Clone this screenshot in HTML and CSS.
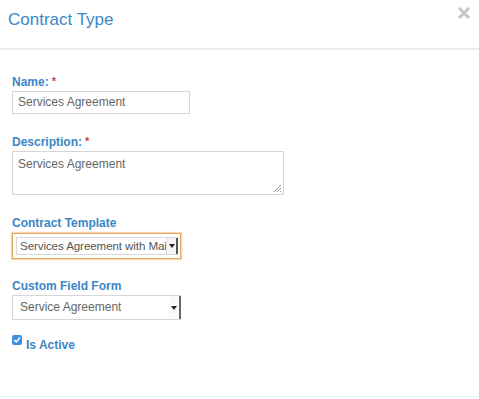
FILE: index.html
```html
<!DOCTYPE html>
<html>
<head>
<meta charset="utf-8">
<link rel="stylesheet" href="styles.css">
</head>
<body>
<div class="modal">
  <div class="modal-header">
    <h1 class="title">Contract Type</h1>
    <svg class="close" width="12" height="12" viewBox="0 0 12 12"><path d="M2 2L10 10M10 2L2 10" stroke="#c6c6c6" stroke-width="3" stroke-linecap="square"/></svg>
  </div>
  <div class="modal-body">
    <div class="field f-name">
      <div class="label">Name:<span class="req">*</span></div>
      <div class="input input-name">Services Agreement</div>
    </div>
    <div class="field f-desc">
      <div class="label">Description:<span class="req">*</span></div>
      <div class="textarea">Services Agreement
        <svg class="grip" width="9" height="9" viewBox="0 0 9 9"><path d="M8 1L1 8M8 4L4 8M8 7L7 8" stroke="#999" stroke-width="1"/></svg>
      </div>
    </div>
    <div class="field f-tpl">
      <div class="label">Contract Template</div>
      <div class="focus-ring">
        <div class="select select-inner">
          <span class="sel-text">Services Agreement with Mai</span>
          <span class="arrow"><svg width="6" height="4" viewBox="0 0 6 4"><path d="M0 0H6L3 4Z" fill="#222"/></svg></span>
        </div>
      </div>
    </div>
    <div class="field f-form">
      <div class="label">Custom Field Form</div>
      <div class="select select-form">
        <span class="sel-text">Service Agreement</span>
        <span class="arrow"><svg width="6" height="4" viewBox="0 0 6 4"><path d="M0 0H6L3 4Z" fill="#222"/></svg></span>
      </div>
    </div>
    <div class="check-row">
      <span class="checkbox"><svg width="10" height="10" viewBox="0 0 10 10"><path d="M2.5 5.2L4.3 7L7.6 2.8" stroke="#fff" stroke-width="1.4" fill="none" stroke-linecap="round" stroke-linejoin="round"/></svg></span>
      <span class="check-label">Is Active</span>
    </div>
  </div>
  <div class="modal-footer"></div>
</div>
</body>
</html>
```
FILE: styles.css
```css
html, body {
  margin: 0;
  padding: 0;
  background: #fff;
}
body {
  font-family: "Liberation Sans", Arial, Helvetica, sans-serif;
  width: 479px;
  height: 399px;
  overflow: hidden;
}
.modal {
  display: flex;
  flex-direction: column;
  height: 399px;
}
.modal-header {
  position: relative;
  height: 48px;
  border-bottom: 2px solid #ececec;
  box-sizing: content-box;
}
.title {
  margin: 0;
  padding: 10px 0 0 8px;
  font-size: 17px;
  line-height: 20px;
  font-weight: normal;
  color: #3d87c6;
}
.close {
  position: absolute;
  right: 9px;
  top: 7px;
}
.modal-body {
  padding: 25px 12px 0 12px;
  flex: 1;
}
.field {
  display: flex;
  flex-direction: column;
  align-items: flex-start;
}
.label {
  font-size: 12px;
  line-height: 14px;
  font-weight: bold;
  color: #3b86c6;
  margin-bottom: 2px;
}
.req {
  color: #c6463f;
  margin-left: 3px;
  font-size: 11px;
  vertical-align: top;
  position: relative;
  top: -1px;
}
.input {
  box-sizing: border-box;
  width: 178px;
  height: 23px;
  border: 1px solid #d6d6d6;
  padding: 0 5px;
  font-size: 12px;
  line-height: 21px;
  color: #666;
}
.f-name { margin-bottom: 21px; }
.f-desc { margin-bottom: 21px; }
.f-tpl { margin-bottom: 20px; }
.f-form { margin-bottom: 15px; }
.textarea {
  position: relative;
  box-sizing: border-box;
  width: 272px;
  height: 44px;
  border: 1px solid #d6d6d6;
  padding: 4px 5px;
  font-size: 12px;
  line-height: 16px;
  color: #666;
}
.grip {
  position: absolute;
  right: 1px;
  bottom: 1px;
}
.focus-ring {
  box-sizing: border-box;
  width: 169px;
  height: 26px;
  border: 1px solid #e6a85f;
  box-shadow: 0 0 1px 1px #f6d6ae;
  padding: 3px 2px 3px 3px;
  margin-top: 1px;
}
.select {
  box-sizing: border-box;
  display: flex;
  align-items: stretch;
  background: #fff;
}
.select-inner {
  height: 18px;
  border: 1px solid #d8d8d8;
  border-right: none;
}
.select-form {
  width: 169px;
  height: 25px;
  border: 1px solid #d6d6d6;
  border-right: none;
}
.sel-text {
  flex: 1;
  overflow: hidden;
  white-space: nowrap;
  font-size: 12px;
  color: #555;
  padding-left: 3px;
  line-height: 16px;
}
.select-inner .sel-text {
  font-size: 11.6px;
  letter-spacing: -0.1px;
}
.select-form .sel-text {
  padding-left: 7px;
  line-height: 23px;
  color: #666;
}
.arrow {
  width: 12px;
  display: flex;
  align-items: center;
  justify-content: center;
  background: #f4f4f4;
  border-left: 1px solid #e2e2e2;
  border-right: 2px solid #555;
  box-sizing: border-box;
}
.select-form .arrow {
  width: 12px;
  background: #fafafa;
  border-left: none;
  border-right: 2px solid #666;
}
.check-row {
  display: flex;
  align-items: flex-start;
}
.checkbox {
  width: 10px;
  height: 10px;
  border-radius: 2px;
  background: #3f8fe0;
  display: flex;
  align-items: center;
  justify-content: center;
  margin-right: 4px;
}
.check-label {
  font-size: 12px;
  line-height: 14px;
  font-weight: bold;
  color: #3b86c6;
  margin-top: 3px;
}
.modal-footer {
  height: 1px;
  border-top: 1px solid #e6edf3;
  margin-bottom: 1px;
}
```
